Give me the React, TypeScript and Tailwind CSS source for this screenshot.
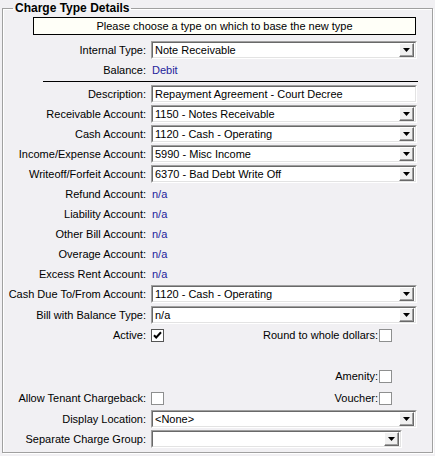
import React from 'react';

const blue = 'text-[#23239b]';

const Dropdown: React.FC<{ value?: string; width?: string }> = ({ value = '', width = 'w-[266px]' }) => (
    <div className={`${width} h-[18px] flex border border-t-[#a0a0a0] border-l-[#a0a0a0] border-r-white border-b-white`}>
        <div className="flex flex-1 items-center border border-t-[#696969] border-l-[#696969] border-r-[#e3e3e3] border-b-[#e3e3e3] bg-white pl-[2px] pr-[1px]">
            <span className="flex-1 truncate">{value}</span>
            <div className="h-[14px] w-[15px] flex items-center justify-center bg-[#f0f0f0] border border-t-white border-l-white border-r-[#696969] border-b-[#696969] shadow-[inset_-1px_-1px_0_#a0a0a0]">
                <svg width="7" height="4" viewBox="0 0 7 4">
                    <path d="M0 0h7L3.5 4z" fill="#000" />
                </svg>
            </div>
        </div>
    </div>
);

const TextBox: React.FC<{ value: string }> = ({ value }) => (
    <div className="w-[266px] h-[18px] flex border border-t-[#a0a0a0] border-l-[#a0a0a0] border-r-white border-b-white">
        <div className="flex flex-1 items-center border border-t-[#696969] border-l-[#696969] border-r-[#e3e3e3] border-b-[#e3e3e3] bg-white pl-[2px]">
            {value}
        </div>
    </div>
);

const Check: React.FC<{ checked?: boolean }> = ({ checked }) => (
    <div className={`h-[13px] w-[13px] flex items-center justify-center bg-white border ${checked ? 'border-[#555]' : 'border-[#8e8f8f]'}`}>
        {checked && (
            <svg width="9" height="9" viewBox="0 0 9 9">
                <path d="M1 4.2l2.2 2.3L8 1.3" stroke="#000" strokeWidth="2" fill="none" />
            </svg>
        )}
    </div>
);

const Row: React.FC<{ label?: string; children?: React.ReactNode; className?: string }> = ({ label, children, className = '' }) => (
    <div className={`grid grid-cols-[143px_266px] gap-x-[5px] h-[20px] items-center ${className}`}>
        <div className="text-right whitespace-nowrap">{label}</div>
        <div className="flex items-center">{children}</div>
    </div>
);

const Value: React.FC<{ children: React.ReactNode }> = ({ children }) => <span className={`${blue} pl-[1px]`}>{children}</span>;

export default function App() {
    return (
        <div className="w-[435px] h-[456px] bg-[#f1f0f3] text-black text-[11px] leading-[13px] font-['Liberation_Sans',Arial,sans-serif] pl-[2px] pt-[1px]">
            <fieldset className="w-[431px] h-[452px] border border-[#a0a0a0] shadow-[inset_1px_1px_0_#fff,1px_1px_0_#fff]">
                <legend className="ml-[10px] px-[2px] font-bold text-[12px] leading-[14px]">Charge Type Details</legend>

                <div className="pt-[2px]">
                    {/* Banner */}
                    <div className="ml-[30px] w-[383px] h-[18px] border border-black bg-[#fffff8] flex items-center justify-center">
                        Please choose a type on which to base the new type
                    </div>

                    <Row label="Internal Type:" className="mt-[5px]">
                        <Dropdown value="Note Receivable" />
                    </Row>
                    <Row label="Balance:">
                        <Value>Debit</Value>
                    </Row>
                    <div className="ml-[40px] w-[375px] h-[1px] bg-black mt-[1px]" />

                    <Row label="Description:" className="mt-[2px]">
                        <TextBox value="Repayment Agreement - Court Decree" />
                    </Row>
                    <Row label="Receivable Account:">
                        <Dropdown value="1150 - Notes Receivable" />
                    </Row>
                    <Row label="Cash Account:">
                        <Dropdown value="1120 - Cash - Operating" />
                    </Row>
                    <Row label="Income/Expense Account:">
                        <Dropdown value="5990 - Misc Income" />
                    </Row>
                    <Row label="Writeoff/Forfeit Account:">
                        <Dropdown value="6370 - Bad Debt Write Off" />
                    </Row>
                    <Row label="Refund Account:"><Value>n/a</Value></Row>
                    <Row label="Liability Account:"><Value>n/a</Value></Row>
                    <Row label="Other Bill Account:"><Value>n/a</Value></Row>
                    <Row label="Overage Account:"><Value>n/a</Value></Row>
                    <Row label="Excess Rent Account:"><Value>n/a</Value></Row>
                    <Row label="Cash Due To/From Account:">
                        <Dropdown value="1120 - Cash - Operating" />
                    </Row>
                    <Row label="Bill with Balance Type:" className="mt-[1px]">
                        <Dropdown value="n/a" />
                    </Row>
                    <Row label="Active:">
                        <div className="flex flex-1 items-center justify-between pr-[25px]">
                            <Check checked />
                            <div className="flex items-center gap-[1px]">
                                <span>Round to whole dollars:</span>
                                <Check />
                            </div>
                        </div>
                    </Row>

                    <Row className="mt-[21px]">
                        <div className="flex flex-1 items-center justify-end gap-[1px] pr-[25px]">
                            <span>Amenity:</span>
                            <Check />
                        </div>
                    </Row>
                    <Row label="Allow Tenant Chargeback:" className="mt-[2px]">
                        <div className="flex flex-1 items-center justify-between pr-[25px]">
                            <Check />
                            <div className="flex items-center gap-[1px]">
                                <span>Voucher:</span>
                                <Check />
                            </div>
                        </div>
                    </Row>
                    <Row label="Display Location:" className="mt-[1px]">
                        <Dropdown value="<None>" />
                    </Row>
                    <Row label="Separate Charge Group:">
                        <Dropdown width="w-[251px]" />
                    </Row>
                </div>
            </fieldset>
        </div>
    );
}
